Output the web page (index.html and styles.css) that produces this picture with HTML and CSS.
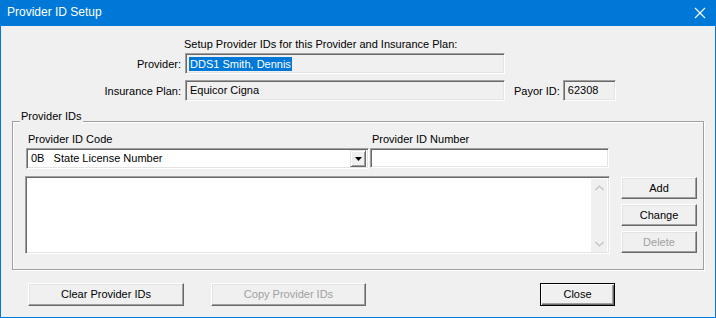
FILE: index.html
```html
<!DOCTYPE html>
<html>
<head>
<meta charset="utf-8">
<title>Provider ID Setup</title>
<link rel="stylesheet" href="styles.css">
</head>
<body>
<div class="window">
  <div class="titlebar">
    <span class="title">Provider ID Setup</span>
    <svg class="close" width="12" height="12" viewBox="0 0 12 12"><path d="M1 1L11 11M11 1L1 11" stroke="#fff" stroke-width="1.1" fill="none"/></svg>
  </div>
  <div class="client">
    <div class="heading">Setup Provider IDs for this Provider and Insurance Plan:</div>
    <div class="row row-provider">
      <span class="lbl">Provider:</span>
      <div class="field ro wide"><span class="sel">DDS1 Smith, Dennis</span></div>
    </div>
    <div class="row row-plan">
      <span class="lbl">Insurance Plan:</span>
      <div class="field ro wide">Equicor Cigna</div>
      <span class="lbl-payor">Payor ID:</span>
      <div class="field ro payor">62308</div>
    </div>
    <div class="group">
      <span class="legend">Provider IDs</span>
      <div class="grow labels">
        <span class="col1">Provider ID Code</span>
        <span class="col2">Provider ID Number</span>
      </div>
      <div class="grow inputs">
        <div class="field combo">
          <span class="combo-text">0B   State License Number</span>
          <span class="drop"><svg width="7" height="4" viewBox="0 0 7 4"><path d="M0 0H7L3.5 4Z" fill="#000"/></svg></span>
        </div>
        <div class="field num"></div>
      </div>
      <div class="grow listrow">
        <div class="field list">
          <div class="list-body"></div>
          <div class="vscroll">
            <svg width="9" height="6" viewBox="0 0 9 6"><path d="M0.5 5L4.5 1L8.5 5" stroke="#c2c2c2" stroke-width="1.2" fill="none"/></svg>
            <svg width="9" height="6" viewBox="0 0 9 6"><path d="M0.5 1L4.5 5L8.5 1" stroke="#c2c2c2" stroke-width="1.2" fill="none"/></svg>
          </div>
        </div>
        <div class="side-btns">
          <button class="btn side">Add</button>
          <button class="btn side">Change</button>
          <button class="btn side" disabled>Delete</button>
        </div>
      </div>
    </div>
    <div class="bottom">
      <button class="btn b-clear">Clear Provider IDs</button>
      <button class="btn b-copy" disabled>Copy Provider IDs</button>
      <button class="btn default b-close">Close</button>
    </div>
  </div>
</div>
</body>
</html>
```
FILE: styles.css
```css
* { box-sizing: border-box; }
html, body { margin: 0; padding: 0; }
body {
  width: 716px;
  height: 318px;
  overflow: hidden;
  font-family: "Liberation Sans", Arial, sans-serif;
  font-size: 11px;
  color: #000;
  background: #f0f0f0;
}
.window { width: 716px; height: 318px; display: flex; flex-direction: column; }
.titlebar {
  height: 26px;
  background: #0078d7;
  color: #fff;
  display: flex;
  align-items: center;
  justify-content: space-between;
  padding: 0 10px 0 7px;
}
.title { font-size: 12px; line-height: 14px; margin-top: -2px; }
.close { display: block; margin-top: -1px; }
.client {
  flex: 1;
  background: #f0f0f0;
  border: 1px solid #0078d7;
  border-top: none;
  display: flex;
  flex-direction: column;
}
.heading { margin: 12px 0 0 183px; line-height: 13px; height: 13px; white-space: nowrap; }
.row { display: flex; align-items: center; }
.row-provider { margin-top: 2px; }
.row-plan { margin-top: 6px; }
.lbl { width: 180px; text-align: right; margin-right: 4px; white-space: nowrap; }
.field {
  border: 1px solid;
  border-color: #a0a0a0 #fff #fff #a0a0a0;
  box-shadow: inset 1px 1px 0 #696969, inset -1px -1px 0 #e3e3e3;
  background: #fff;
  white-space: nowrap;
}
.ro {
  background: #f0f0f0;
  height: 21px;
  line-height: 19px;
  padding: 0 3px 0 4px;
  display: flex;
  align-items: center;
}
.wide { width: 320px; }
.sel { background: #0078d7; color: #fff; line-height: 14px; padding: 0 1px 0 1px; margin-left: -1px; }
.lbl-payor { margin-left: 9px; margin-right: 3px; white-space: nowrap; }
.payor { width: 53px; }
.group {
  position: relative;
  margin: 20px 0 0 11px;
  width: 692px;
  height: 149px;
  border: 1px solid #a0a0a0;
  box-shadow: inset 1px 1px 0 #fff, 1px 1px 0 #fff;
  padding: 10px 0 0 13px;
}
.legend {
  position: absolute;
  left: 7px;
  top: -12px;
  padding: 0 1px;
  background: #f0f0f0;
  line-height: 13px;
}
.grow { display: flex; }
.labels { height: 14px; line-height: 14px; }
.col1 { width: 344px; padding-left: 2px; }
.col2 { padding-left: 2px; }
.inputs { margin-top: 2px; }
.combo {
  width: 343px;
  height: 21px;
  display: flex;
  align-items: center;
  justify-content: space-between;
  padding: 2px 2px 2px 4px;
}
.combo-text { white-space: pre; line-height: 15px; }
.drop {
  width: 16px;
  height: 17px;
  background: #f0f0f0;
  border: 1px solid;
  border-color: #e3e3e3 #696969 #696969 #e3e3e3;
  box-shadow: inset 1px 1px 0 #fff, inset -1px -1px 0 #a0a0a0;
  display: flex;
  align-items: center;
  justify-content: center;
}
.drop svg { display: block; margin-top: 1px; }
.num { width: 239px; height: 20px; margin-left: 1px; }
.listrow { margin-top: 7px; }
.list {
  margin-left: -1px;
  width: 585px;
  height: 78px;
  display: flex;
  padding: 2px 2px 1px 2px;
}
.list-body { flex: 1; }
.vscroll {
  width: 16px;
  background: #f0f0f0;
  display: flex;
  flex-direction: column;
  justify-content: space-between;
  align-items: center;
  padding: 6px 0 5px;
}
.vscroll svg { display: block; }
.side-btns {
  margin-left: 11px;
  margin-top: 1px;
  display: flex;
  flex-direction: column;
  gap: 5px;
}
.btn {
  font-family: "Liberation Sans", Arial, sans-serif;
  font-size: 11px;
  color: #000;
  background: #f0f0f0;
  border: 1px solid;
  border-color: #fff #696969 #696969 #fff;
  box-shadow: inset -1px -1px 0 #a0a0a0, inset 1px 1px 0 #e3e3e3;
  padding: 0;
  margin: 0;
  line-height: 13px;
  text-align: center;
}
.btn:disabled { color: #a0a0a0; }
.side { width: 76px; height: 22px; }
.default {
  border: 1px solid #000;
  box-shadow: inset 1px 1px 0 #fff, inset -1px -1px 0 #696969, inset -2px -2px 0 #a0a0a0;
}
.bottom { display: flex; margin-top: 13px; padding-left: 27px; }
.bottom .btn { height: 23px; }
.b-clear { width: 156px; }
.b-copy { width: 155px; margin-left: 27px; }
.b-close { width: 75px; margin-left: 174px; }
```
